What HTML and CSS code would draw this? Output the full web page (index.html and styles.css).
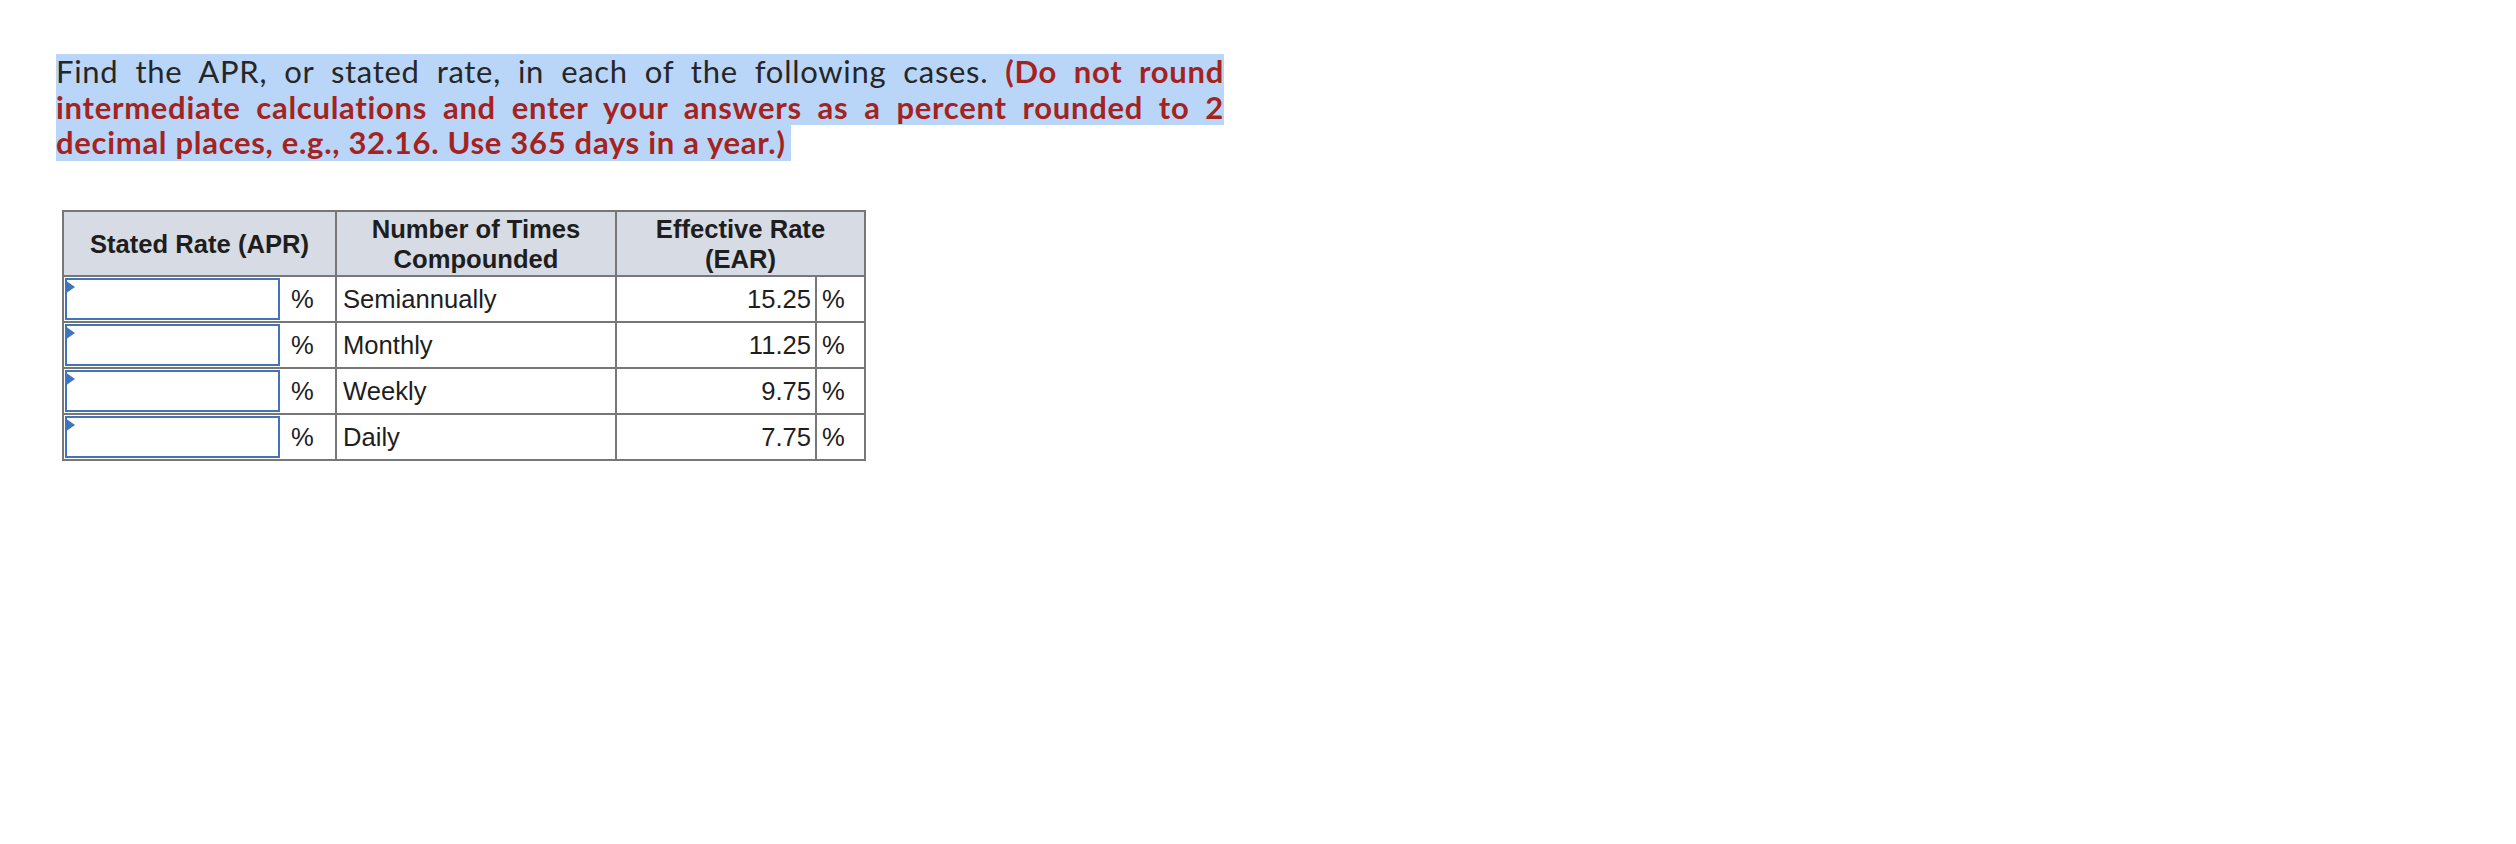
FILE: index.html
```html
<!DOCTYPE html>
<html lang="en">
<head>
<meta charset="utf-8">
<title>APR question</title>
<link rel="stylesheet" href="styles.css">
</head>
<body>
<main class="page">
  <div class="prompt">
    <div class="line">Find the APR, or stated rate, in each of the following cases. <strong>(Do not round</strong></div>
    <div class="line"><strong>intermediate calculations and enter your answers as a percent rounded to 2</strong></div>
    <div class="line last"><strong>decimal places, e.g., 32.16. Use 365 days in a year.)</strong></div>
  </div>

  <table class="rates">
    <thead>
      <tr>
        <th colspan="2" class="h-apr">Stated Rate (APR)</th>
        <th class="h-comp">Number of Times<br>Compounded</th>
        <th colspan="2" class="h-ear">Effective Rate<br>(EAR)</th>
      </tr>
    </thead>
    <tbody>
      <tr>
        <td class="in-cell"><div class="field"><input type="text" aria-label="APR semiannually"><span class="flag"></span></div></td>
        <td class="pct">%</td>
        <td class="comp">Semiannually</td>
        <td class="num">15.25</td>
        <td class="pct2">%</td>
      </tr>
      <tr>
        <td class="in-cell"><div class="field"><input type="text" aria-label="APR monthly"><span class="flag"></span></div></td>
        <td class="pct">%</td>
        <td class="comp">Monthly</td>
        <td class="num">11.25</td>
        <td class="pct2">%</td>
      </tr>
      <tr>
        <td class="in-cell"><div class="field"><input type="text" aria-label="APR weekly"><span class="flag"></span></div></td>
        <td class="pct">%</td>
        <td class="comp">Weekly</td>
        <td class="num">9.75</td>
        <td class="pct2">%</td>
      </tr>
      <tr>
        <td class="in-cell"><div class="field"><input type="text" aria-label="APR daily"><span class="flag"></span></div></td>
        <td class="pct">%</td>
        <td class="comp">Daily</td>
        <td class="num">7.75</td>
        <td class="pct2">%</td>
      </tr>
    </tbody>
  </table>
</main>
</body>
</html>
```

FILE: styles.css
```css
html, body {
  margin: 0;
  padding: 0;
  background: #ffffff;
}

.page {
  padding: 54px 0 0 56px;
}

.prompt {
  width: 1168px;
  font-family: Lato, "Open Sans", sans-serif;
  font-size: 31px;
  letter-spacing: 0.7px;
  color: #262626;
}

.line {
  height: 35.7px;
  line-height: 35.7px;
  background: #b9d6f9;
  text-align: justify;
  text-align-last: justify;
  white-space: nowrap;
}

.line.last {
  width: fit-content;
  text-align-last: left;
  padding-right: 5px;
}

.prompt strong {
  color: #a5231f;
  font-weight: 700;
}

.rates {
  margin: 49px 0 0 6px;
  border-collapse: collapse;
  border: 2px solid #777777;
  font-family: "Liberation Sans", Arial, sans-serif;
  font-size: 25.6px;
  color: #1e1e1e;
}

.rates th,
.rates td {
  border: 2px solid #777777;
  padding: 0;
}

.rates th {
  background: #d7dce4;
  font-weight: 700;
  height: 63px;
  line-height: 30px;
  text-align: center;
  vertical-align: middle;
}

.h-apr { width: 269px; }
.h-comp { width: 278px; }
.h-ear { width: 247px; }

.rates td {
  height: 44px;
  vertical-align: middle;
}

.rates td.in-cell {
  width: 218px;
  border-right: none;
  padding: 0 1px 0 1px;
}

.field {
  position: relative;
  width: 215px;
  height: 42px;
}

.field input {
  box-sizing: border-box;
  width: 215px;
  height: 42px;
  margin: 0;
  border: 2px solid #4373b9;
  background: #ffffff;
  display: block;
  font: inherit;
  padding: 0 6px;
}

.flag {
  position: absolute;
  left: 0;
  top: 2px;
  width: 0;
  height: 0;
  border-top: 7px solid transparent;
  border-bottom: 7px solid transparent;
  border-left: 10px solid #3f74c0;
}

.rates td.pct {
  border-left: none;
  padding-left: 7px;
  width: 44px;
}

.rates td.comp {
  padding-left: 6px;
}

.rates td.num {
  text-align: right;
  padding-right: 4px;
  width: 194px;
}

.rates td.pct2 {
  padding-left: 5px;
  width: 42px;
}
```
